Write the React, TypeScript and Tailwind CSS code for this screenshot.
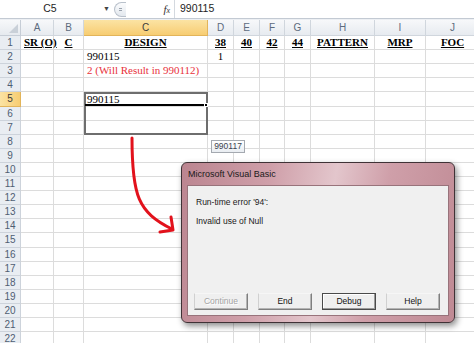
import React from "react";
import clsx from "clsx";

const GRID = "grid grid-cols-[21px_33px_30px_124px_26px_26px_25px_26px_64px_51px_54px]";
const LETTERS = ["A", "B", "C", "D", "E", "F", "G", "H", "I", "J"];
const ROW1 = ["SR (O)", "C", "DESIGN", "38", "40", "42", "44", "PATTERN", "MRP", "FOC"];
const ROWS = Array.from({ length: 22 }, (_, i) => i + 1);

// rows are ~14.1px in the shot, so every tenth one gets an extra pixel
const rowHeight = (n: number) => (n === 5 || n === 15 ? "h-[15px]" : "h-[14px]");

const Cell = ({
  children,
  left = false,
}: {
  children?: React.ReactNode;
  left?: boolean;
}) => (
  <div
    className={clsx(
      "flex min-w-0 items-center whitespace-nowrap border-r border-b border-[#dcdcdc] font-['Liberation_Serif',serif] text-[11px] leading-none text-black",
      left ? "justify-start pl-[3px]" : "justify-center"
    )}
  >
    {children}
  </div>
);

const cellFor = (row: number, col: number) => {
  if (row === 1) {
    return (
      <Cell key={col} left={col === 0}>
        <span className="font-bold underline underline-offset-[1px]">{ROW1[col]}</span>
      </Cell>
    );
  }
  if (row === 2 && col === 2) return <Cell key={col} left>990115</Cell>;
  if (row === 2 && col === 3) return <Cell key={col}>1</Cell>;
  if (row === 3 && col === 2)
    return (
      <Cell key={col} left>
        <span className="text-[#e8313b]">2 (Will Result in 990112)</span>
      </Cell>
    );
  if (row === 5 && col === 2) return <Cell key={col} left>990115</Cell>;
  return <Cell key={col} />;
};

const VbButton = ({
  label,
  disabled = false,
  isDefault = false,
}: {
  label: string;
  disabled?: boolean;
  isDefault?: boolean;
}) => (
  <div
    className={clsx(
      "flex h-[17px] w-[54px] items-center justify-center bg-[#efefef] text-[8.5px] leading-none",
      isDefault
        ? "border border-[#4a4a4a] shadow-[inset_-1px_-1px_0_#9a9a9a,inset_1px_1px_0_#ffffff]"
        : "border border-t-[#f6f6f6] border-l-[#d0d0d0] border-r-[#7f7f7f] border-b-[#7f7f7f] shadow-[inset_-1px_-1px_0_#b4b4b4]",
      disabled ? "text-[#a3a3a3] [text-shadow:1px_1px_0_#ffffff]" : "text-[#111]"
    )}
  >
    {label}
  </div>
);

export default function App() {
  return (
    <div className="relative h-[343px] w-[474px] overflow-hidden bg-white font-['Liberation_Sans',Arial,sans-serif]">
      {/* Formula bar */}
      <div className="flex h-[19px] items-center border-b border-[#c3cad3] bg-white text-[10.5px] text-[#1e1e1e]">
        <div className="flex w-[100px] justify-center">C5</div>
        <div className="flex w-[13px] justify-center text-[7px] text-[#444]">▼</div>
        <div className="ml-[1px] flex h-[15px] w-[12px] items-center justify-center rounded-l-full border border-r-0 border-[#b9c1cb] bg-gradient-to-b from-[#fbfcfd] to-[#e3e8ee]">
          <div className="flex flex-col gap-[1px]">
            <span className="h-px w-[3px] bg-[#9aa3ae]" />
            <span className="h-px w-[3px] bg-[#9aa3ae]" />
          </div>
        </div>
        <div className="flex w-[48px] justify-end pr-[4px]">
          <span className="font-['Liberation_Serif',serif] text-[11px] italic text-[#333]">
            f<span className="text-[8px]">x</span>
          </span>
        </div>
        <div className="flex h-full flex-1 items-center border-l border-[#d4d9df] pl-[5px]">990115</div>
      </div>
      <div className="h-px bg-[#eceff3]" />

      {/* Column headers */}
      <div className={clsx(GRID, "h-[16px] text-[10px] leading-none")}>
        <div className="relative border-r border-b border-[#c6cdd6] bg-gradient-to-b from-[#f7f8fa] to-[#e6eaef]">
          <svg className="absolute right-[2px] bottom-[2px]" width="9" height="9" viewBox="0 0 9 9">
            <polygon points="9,0 9,9 0,9" fill="#c9d0d8" />
          </svg>
        </div>
        {LETTERS.map((l) => (
          <div
            key={l}
            className={clsx(
              "flex items-center justify-center border-r border-b",
              l === "C"
                ? "border-[#e2b45a] bg-gradient-to-b from-[#fbe3a3] to-[#f7cd72] text-[#3a3a3a]"
                : "border-[#d0d6dd] bg-gradient-to-b from-[#f7f8fa] to-[#e7ebf0] text-[#5d6b7e]"
            )}
          >
            {l}
          </div>
        ))}
      </div>

      {/* Rows */}
      {ROWS.map((r) => (
        <div key={r} className={clsx(GRID, rowHeight(r))}>
          <div
            className={clsx(
              "flex items-center justify-center border-r border-b text-[10px] leading-none",
              r === 5
                ? "border-[#e2b45a] bg-gradient-to-r from-[#fbe3a3] to-[#f7cd72] text-[#3a3a3a]"
                : "border-[#cdd3db] bg-[#e9edf2] text-[#4f5e73]"
            )}
          >
            {r}
          </div>
          {LETTERS.map((_, c) => cellFor(r, c))}
        </div>
      ))}

      {/* In-cell list box over C5:C7 */}
      <div className="absolute top-[92px] left-[84px] h-[43px] w-[124px] border-2 border-[#6e6e6e]" />
      <div className="absolute top-[104px] left-[85px] h-[2px] w-[121px] bg-black" />
      <div className="absolute top-[103px] left-[204px] h-[4px] w-[4px] border border-white bg-black" />

      {/* Value tip */}
      <div className="absolute top-[140px] left-[211px] flex h-[13px] w-[34px] items-center justify-center border border-[#a4a9b0] bg-gradient-to-b from-white to-[#e9edf2] text-[8.5px] leading-none text-[#3c4450]">
        990117
      </div>

      {/* Red hand-drawn arrow */}
      <svg className="pointer-events-none absolute top-0 left-0" width="474" height="343" viewBox="0 0 474 343">
        <path
          d="M132 138 C 132 196, 138 212, 172 229"
          fill="none"
          stroke="#e2121c"
          strokeWidth="3"
          strokeLinecap="round"
        />
        <path
          d="M171 217 L 173 230 L 160 232"
          fill="none"
          stroke="#e2121c"
          strokeWidth="3"
          strokeLinecap="round"
          strokeLinejoin="round"
        />
      </svg>

      {/* VBA error dialog */}
      <div className="absolute top-[162px] left-[181px] flex h-[161px] w-[274px] flex-col rounded-[6px] border border-[#3f3236] bg-[linear-gradient(100deg,#bb8590_0%,#cf9fa9_30%,#e3c6cc_52%,#cf9fa9_70%,#bf8a94_100%)] shadow-[2px_3px_6px_rgba(0,0,0,0.45)]">
        <div className="flex h-[22px] items-center pl-[6px] text-[9px] leading-none text-[#1a1a1a]">
          Microsoft Visual Basic
        </div>
        <div className="mx-[5px] mb-[6px] flex flex-1 flex-col border border-[#98737b] bg-[#f0f0f0] text-[8.5px] leading-[10px] text-[#1a1a1a]">
          <div className="pt-[11px] pl-[8px]">Run-time error &apos;94&apos;:</div>
          <div className="mt-[9px] pl-[8px]">Invalid use of Null</div>
          <div className="mt-auto mb-[5px] flex gap-[10px] pl-[6px]">
            <VbButton label="Continue" disabled />
            <VbButton label="End" />
            <VbButton label="Debug" isDefault />
            <VbButton label="Help" />
          </div>
        </div>
      </div>
    </div>
  );
}
